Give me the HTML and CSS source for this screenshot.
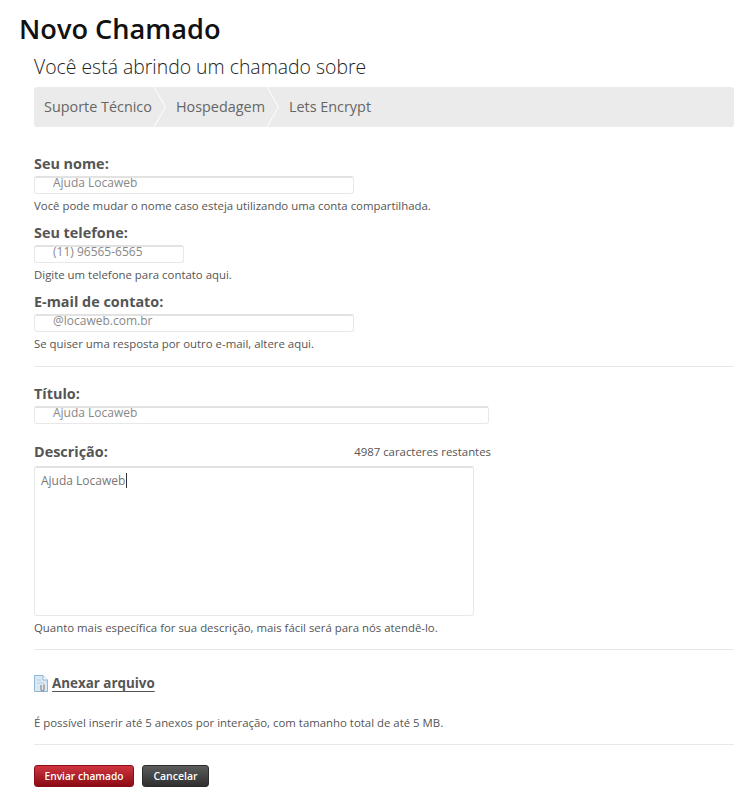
FILE: index.html
```html
<!DOCTYPE html>
<html lang="pt-BR">
<head>
    <meta charset="UTF-8">
    <meta name="viewport" content="width=device-width, initial-scale=1.0">
    <title>Novo Chamado</title>
    <link rel="stylesheet" href="styles.css">
</head>
<body>
    <h1>Novo Chamado</h1>
    <div class="content">
        <h2>Você está abrindo um chamado sobre</h2>
        <ul class="crumbs">
            <li>Suporte Técnico</li>
            <li>Hospedagem</li>
            <li>Lets Encrypt</li>
        </ul>

        <form class="contact">
            <label>Seu nome:</label>
            <input class="field wide" type="text" value="Ajuda Locaweb">
            <p class="hint">Você pode mudar o nome caso esteja utilizando uma conta compartilhada.</p>

            <label>Seu telefone:</label>
            <input class="field short" type="text" value="(11) 96565-6565">
            <p class="hint">Digite um telefone para contato aqui.</p>

            <label>E-mail de contato:</label>
            <input class="field wide" type="text" value="@locaweb.com.br">
            <p class="hint">Se quiser uma resposta por outro e-mail, altere aqui.</p>

            <hr class="sep-contact">

            <label>Título:</label>
            <input class="field title" type="text" value="Ajuda Locaweb">

            <div class="desc-head">
                <label>Descrição:</label>
                <span>4987 caracteres restantes</span>
            </div>
            <div class="desc-box">Ajuda Locaweb<span class="caret"></span></div>
            <p class="hint">Quanto mais específica for sua descrição, mais fácil será para nós atendê-lo.</p>

            <hr class="sep-desc">

            <div class="attach">
                <svg width="14" height="17" viewBox="0 0 14 17">
                    <path d="M.5 .5H9L13.5 5V16.5H.5Z" fill="#dbe9f5" stroke="#8fb6d4"/>
                    <path d="M9 .5V5H13.5" fill="#fff" stroke="#8fb6d4"/>
                    <path d="M3 5H7M3 8H10" stroke="#b5cfe3"/>
                    <path d="M7 10V14.5A1.5 1.5 0 0 0 10 14.5V9.5" fill="none" stroke="#888" stroke-width="1.2"/>
                </svg>
                <a href="#">Anexar arquivo</a>
            </div>
            <p class="hint attach-hint">É possível inserir até 5 anexos por interação, com tamanho total de até 5 MB.</p>

            <hr class="sep-attach">

            <div class="actions">
                <button type="button" class="btn send">Enviar chamado</button>
                <button type="button" class="btn cancel">Cancelar</button>
            </div>
        </form>
    </div>
</body>
</html>
```

FILE: styles.css
```css
body {
    margin: 0;
    padding: 0 8px 0 19px;
    background: #fff;
    font-family: "Open Sans", sans-serif;
    color: #555;
}
h1 {
    margin: 0;
    padding-top: 11px;
    font-size: 27.2px;
    line-height: 36px;
    font-weight: 600;
    color: #111;
}
.content { padding-left: 15px; }
h2 {
    margin: 0;
    padding-top: 6px;
    font-size: 19.4px;
    line-height: 27px;
    font-weight: 300;
    color: #222;
}
.crumbs {
    display: flex;
    margin: 7px 0 0;
    padding: 0;
    height: 40px;
    list-style: none;
    background: #ebebeb;
    border-radius: 3px;
    overflow: hidden;
}
.crumbs li {
    position: relative;
    padding: 0 12px 0 10px;
    font-size: 14.4px;
    line-height: 40px;
    color: #666;
}
.crumbs li + li { padding-left: 12px; }
.crumbs li:not(:last-child)::after {
    content: "";
    position: absolute;
    top: -1px;
    right: -2px;
    width: 13px;
    height: 42px;
    background: #fff;
    clip-path: polygon(0 0, 1px 0, 100% 50%, 1px 100%, 0 100%, calc(100% - 1px) 50%);
}
.contact { padding-top: 27px; }
label {
    display: block;
    font-size: 14.4px;
    line-height: 19px;
    font-weight: 700;
    color: #555;
}
.field {
    display: block;
    box-sizing: border-box;
    height: 18px;
    margin-top: 3px;
    padding: 0 0 7px 18px;
    border: 1px solid #e8e8e8;
    border-top: 2px solid #e2e2e2;
    border-radius: 3px;
    font-family: inherit;
    font-size: 12px;
    color: #888;
    background: #fff;
}
.wide { width: 320px; }
.short { width: 150px; }
.title { width: 455px; }
.hint {
    margin: 4px 0 0;
    font-size: 11.4px;
    line-height: 15px;
    color: #555;
}
.hint + label { margin-top: 10px; }
hr {
    margin: 0;
    border: 0;
    border-top: 1px solid #e8e8e8;
}
.sep-contact { margin: 15px 0 17px; }
.desc-head {
    display: flex;
    justify-content: space-between;
    align-items: center;
    width: 457px;
    margin-top: 18px;
}
.desc-head span {
    font-size: 11.4px;
    color: #555;
}
.desc-box {
    box-sizing: border-box;
    width: 440px;
    height: 150px;
    margin-top: 5px;
    padding: 5px 6px;
    border: 1px solid #e8e8e8;
    border-top: 2px solid #e2e2e2;
    border-radius: 3px;
    font-size: 12px;
    line-height: 16px;
    color: #777;
}
.caret {
    display: inline-block;
    width: 1px;
    height: 15px;
    margin-left: 1px;
    vertical-align: top;
    background: #333;
}
.sep-desc { margin: 14px 0 23px; }
.attach {
    display: flex;
    align-items: center;
    gap: 4px;
    height: 20px;
}
.attach a {
    font-size: 13.4px;
    font-weight: 700;
    color: #555;
    text-underline-offset: 3px;
}
.attach-hint { margin-top: 22px; }
.sep-attach { margin: 14px 0 20px; }
.actions {
    display: flex;
    gap: 8px;
}
.btn {
    height: 22px;
    padding: 0;
    border-radius: 3px;
    font-family: inherit;
    font-size: 10.5px;
    font-weight: 600;
    white-space: nowrap;
    color: #fff;
}
.send {
    width: 100px;
    font-size: 10.2px;
    border: 1px solid #8d0e18;
    background: linear-gradient(#cf3540, #8c0b14);
}
.cancel {
    width: 67px;
    border: 1px solid #2c2c2c;
    background: linear-gradient(#5c5c5c, #2f2f2f);
}
```
